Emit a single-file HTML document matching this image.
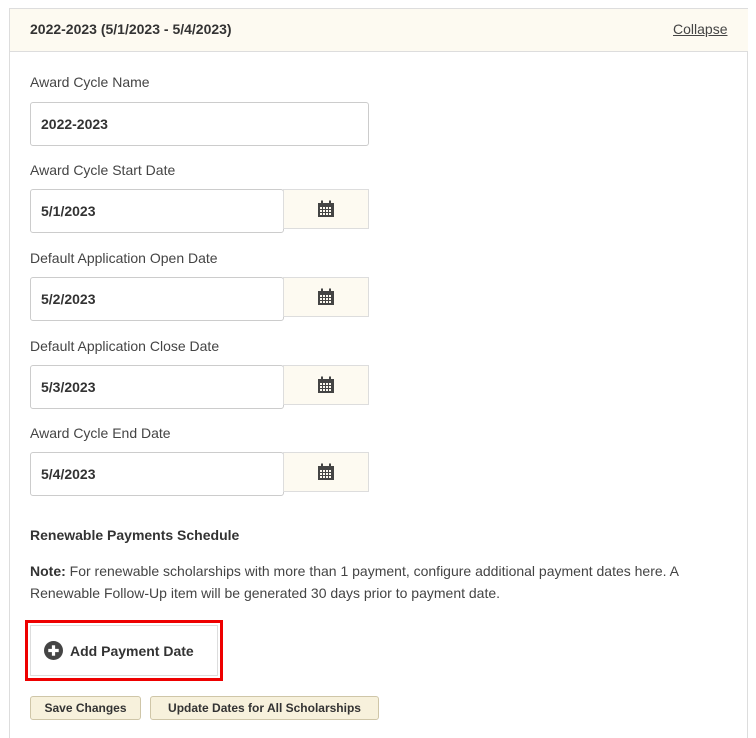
<!DOCTYPE html>
<html style="overflow:hidden;height:738px"><head><style>
body{margin:0;width:756px;height:738px;background:#fff;font-family:"Liberation Sans",sans-serif;color:#333;position:relative;overflow:hidden}
.a{position:absolute}
.panel{left:9px;top:8px;width:739px;height:730px;border:1px solid #ddd;border-bottom:none;box-sizing:border-box}
.hdr{left:10px;top:9px;width:738px;height:42px;background:#fdfaf1;border-bottom:1px solid #ddd}
.lbl{font-size:14px;color:#444}
.inp{border:1px solid #ccc;border-radius:3px;box-sizing:border-box;font-size:14px;font-weight:bold;padding-left:10px;line-height:42px;color:#333;background:#fff}
.add{background:#fdfaf1;border:1px solid #ddd;box-sizing:border-box;display:flex;align-items:center;justify-content:center}
.btn{background:#f7f1dc;border:1px solid #cfc6a8;border-radius:3px;box-sizing:border-box;font-size:12px;font-weight:bold;text-align:center;line-height:22px;color:#333}
</style></head><body>
<div class="a panel"></div>
<div class="a hdr"></div>
<div class="a" style="left:30px;top:21px;font-size:14px;font-weight:bold">2022-2023 (5/1/2023 - 5/4/2023)</div>
<div class="a" style="left:673px;top:21px;font-size:14px;text-decoration:underline;color:#444">Collapse</div>

<div class="a lbl" style="left:30px;top:74px">Award Cycle Name</div>
<div class="a inp" style="left:30px;top:102px;width:339px;height:44px">2022-2023</div>

<div class="a lbl" style="left:30px;top:162px">Award Cycle Start Date</div>
<div class="a inp" style="left:30px;top:189px;width:254px;height:44px">5/1/2023</div>
<div class="a add" style="left:283px;top:189px;width:86px;height:40px"><svg width="18" height="18" viewBox="0 0 18 18"><rect x="1" y="3" width="16" height="14" fill="#444"/><rect x="4" y="0.5" width="2" height="4" fill="#444"/><rect x="12" y="0.5" width="2" height="4" fill="#444"/><g fill="#fdfaf1"><rect x="3" y="7" width="2" height="2"/><rect x="6" y="7" width="2" height="2"/><rect x="9" y="7" width="2" height="2"/><rect x="12" y="7" width="2" height="2"/><rect x="3" y="10" width="2" height="2"/><rect x="6" y="10" width="2" height="2"/><rect x="9" y="10" width="2" height="2"/><rect x="12" y="10" width="2" height="2"/><rect x="3" y="13" width="2" height="2"/><rect x="6" y="13" width="2" height="2"/><rect x="9" y="13" width="2" height="2"/><rect x="12" y="13" width="2" height="2"/></g></svg></div>

<div class="a lbl" style="left:30px;top:250px">Default Application Open Date</div>
<div class="a inp" style="left:30px;top:277px;width:254px;height:44px">5/2/2023</div>
<div class="a add" style="left:283px;top:277px;width:86px;height:40px"><svg width="18" height="18" viewBox="0 0 18 18"><rect x="1" y="3" width="16" height="14" fill="#444"/><rect x="4" y="0.5" width="2" height="4" fill="#444"/><rect x="12" y="0.5" width="2" height="4" fill="#444"/><g fill="#fdfaf1"><rect x="3" y="7" width="2" height="2"/><rect x="6" y="7" width="2" height="2"/><rect x="9" y="7" width="2" height="2"/><rect x="12" y="7" width="2" height="2"/><rect x="3" y="10" width="2" height="2"/><rect x="6" y="10" width="2" height="2"/><rect x="9" y="10" width="2" height="2"/><rect x="12" y="10" width="2" height="2"/><rect x="3" y="13" width="2" height="2"/><rect x="6" y="13" width="2" height="2"/><rect x="9" y="13" width="2" height="2"/><rect x="12" y="13" width="2" height="2"/></g></svg></div>

<div class="a lbl" style="left:30px;top:338px">Default Application Close Date</div>
<div class="a inp" style="left:30px;top:365px;width:254px;height:44px">5/3/2023</div>
<div class="a add" style="left:283px;top:365px;width:86px;height:40px"><svg width="18" height="18" viewBox="0 0 18 18"><rect x="1" y="3" width="16" height="14" fill="#444"/><rect x="4" y="0.5" width="2" height="4" fill="#444"/><rect x="12" y="0.5" width="2" height="4" fill="#444"/><g fill="#fdfaf1"><rect x="3" y="7" width="2" height="2"/><rect x="6" y="7" width="2" height="2"/><rect x="9" y="7" width="2" height="2"/><rect x="12" y="7" width="2" height="2"/><rect x="3" y="10" width="2" height="2"/><rect x="6" y="10" width="2" height="2"/><rect x="9" y="10" width="2" height="2"/><rect x="12" y="10" width="2" height="2"/><rect x="3" y="13" width="2" height="2"/><rect x="6" y="13" width="2" height="2"/><rect x="9" y="13" width="2" height="2"/><rect x="12" y="13" width="2" height="2"/></g></svg></div>

<div class="a lbl" style="left:30px;top:425px">Award Cycle End Date</div>
<div class="a inp" style="left:30px;top:452px;width:254px;height:44px">5/4/2023</div>
<div class="a add" style="left:283px;top:452px;width:86px;height:40px"><svg width="18" height="18" viewBox="0 0 18 18"><rect x="1" y="3" width="16" height="14" fill="#444"/><rect x="4" y="0.5" width="2" height="4" fill="#444"/><rect x="12" y="0.5" width="2" height="4" fill="#444"/><g fill="#fdfaf1"><rect x="3" y="7" width="2" height="2"/><rect x="6" y="7" width="2" height="2"/><rect x="9" y="7" width="2" height="2"/><rect x="12" y="7" width="2" height="2"/><rect x="3" y="10" width="2" height="2"/><rect x="6" y="10" width="2" height="2"/><rect x="9" y="10" width="2" height="2"/><rect x="12" y="10" width="2" height="2"/><rect x="3" y="13" width="2" height="2"/><rect x="6" y="13" width="2" height="2"/><rect x="9" y="13" width="2" height="2"/><rect x="12" y="13" width="2" height="2"/></g></svg></div>

<div class="a" style="left:30px;top:527px;font-size:14px;font-weight:bold">Renewable Payments Schedule</div>
<div class="a" style="left:30px;top:560px;width:710px;font-size:14px;line-height:22px;color:#444"><b style="color:#333">Note:</b> For renewable scholarships with more than 1 payment, configure additional payment dates here. A Renewable Follow-Up item will be generated 30 days prior to payment date.</div>

<div class="a" style="left:25px;top:620px;width:198px;height:61px;border:3px solid #e00;box-sizing:border-box"></div>
<div class="a" style="left:30px;top:625px;width:188px;height:51px;border:1px solid #ddd;box-sizing:border-box;display:flex;align-items:center;padding-left:13px;font-size:14px;font-weight:bold;color:#333">
<svg width="19" height="19" viewBox="0 0 20 20" style="margin-right:7px"><circle cx="10" cy="10" r="10" fill="#444"/><rect x="8.3" y="4.5" width="3.4" height="11" fill="#fff"/><rect x="4.5" y="8.3" width="11" height="3.4" fill="#fff"/></svg>Add Payment Date</div>

<div class="a btn" style="left:30px;top:696px;width:111px;height:24px">Save Changes</div>
<div class="a btn" style="left:150px;top:696px;width:229px;height:24px">Update Dates for All Scholarships</div>
</body></html>
